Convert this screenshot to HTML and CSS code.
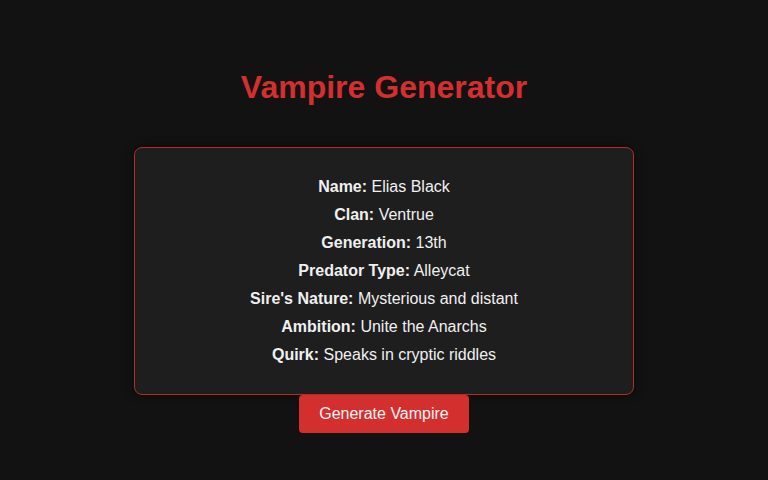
FILE: index.html
```html
<!DOCTYPE html>
<html lang="en">
<head>
    <meta charset="UTF-8">
    <meta name="viewport" content="width=device-width, initial-scale=1.0">
    <title>Vampire Generator</title>
    <link rel="stylesheet" href="styles.css">
</head>
<body>
    <h1>Vampire Generator</h1>
    <div class="card" id="vampire">
        <p><strong>Name:</strong> Elias Black</p>
        <p><strong>Clan:</strong> Ventrue</p>
        <p><strong>Generation:</strong> 13th</p>
        <p><strong>Predator Type:</strong> Alleycat</p>
        <p><strong>Sire's Nature:</strong> Mysterious and distant</p>
        <p><strong>Ambition:</strong> Unite the Anarchs</p>
        <p><strong>Quirk:</strong> Speaks in cryptic riddles</p>
    </div>
    <button class="generate">Generate Vampire</button>
</body>
</html>
```

FILE: styles.css
```css
body {
    font-family: "Liberation Sans", Arial, sans-serif;
    background-color: #121212;
    color: #f0f0f0;
    margin: 0;
    padding: 69px 20px 20px;
    display: flex;
    flex-direction: column;
    align-items: center;
}
h1 {
    color: #d32f2f;
    font-size: 32px;
    margin: 0 0 41px;
    line-height: 37px;
}
.card {
    box-sizing: border-box;
    width: 500px;
    padding: 25px 20px;
    background: #1e1e1e;
    border: 1px solid #b22a2a;
    border-radius: 8px;
    box-shadow: 0 0 10px rgba(0, 0, 0, 0.5);
    text-align: center;
}
.card p {
    margin: 0;
    font-size: 16px;
    line-height: 28px;
}
.generate {
    font-family: inherit;
    font-size: 16px;
    line-height: 18px;
    padding: 10px 20px;
    background: #d32f2f;
    color: #f5f5f5;
    border: none;
    border-radius: 4px;
    cursor: pointer;
}
```
